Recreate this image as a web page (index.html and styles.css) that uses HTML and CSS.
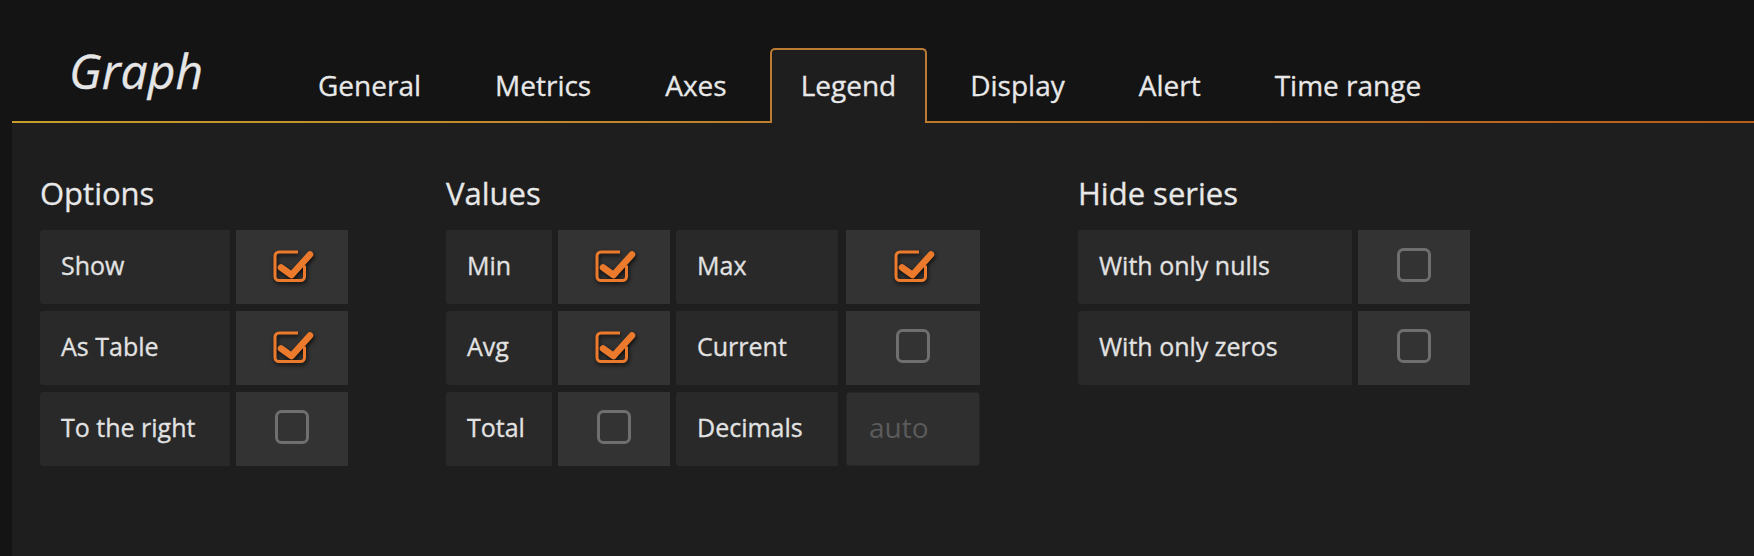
FILE: index.html
```html
<!DOCTYPE html>
<html lang="en">
<head>
<meta charset="utf-8">
<title>Graph - Legend</title>
<link rel="stylesheet" href="styles.css">
</head>
<body>
<div class="header">
  <div class="title">Graph</div>
  <nav class="tabs">
    <div class="tab">General</div>
    <div class="tab">Metrics</div>
    <div class="tab">Axes</div>
    <div class="tab active">Legend</div>
    <div class="tab">Display</div>
    <div class="tab">Alert</div>
    <div class="tab">Time range</div>
  </nav>
</div>
<div class="panel">
  <section class="group">
    <h5 class="group-title">Options</h5>
    <div class="grid grid-options">
      <div class="lbl">Show</div>
      <div class="cb"><svg class="cb-on" viewBox="0 0 50 46" width="50" height="46"><path d="M37.5 21.5V32.5A4 4 0 0 1 33.5 36.5H12A4 4 0 0 1 8 32.5V12A4 4 0 0 1 12 8H31" fill="none" stroke="#ec7a2c" stroke-width="3"/><path d="M14 23.5L24.5 31L43 10.5" fill="none" stroke="#ec7a2c" stroke-width="6.5" stroke-linecap="round" stroke-linejoin="round"/></svg></div>
      <div class="lbl">As Table</div>
      <div class="cb"><svg class="cb-on" viewBox="0 0 50 46" width="50" height="46"><path d="M37.5 21.5V32.5A4 4 0 0 1 33.5 36.5H12A4 4 0 0 1 8 32.5V12A4 4 0 0 1 12 8H31" fill="none" stroke="#ec7a2c" stroke-width="3"/><path d="M14 23.5L24.5 31L43 10.5" fill="none" stroke="#ec7a2c" stroke-width="6.5" stroke-linecap="round" stroke-linejoin="round"/></svg></div>
      <div class="lbl">To the right</div>
      <div class="cb"><svg class="cb-off" viewBox="0 0 34 34" width="34" height="34"><rect x="1.5" y="1.5" width="31" height="31" rx="5" fill="none" stroke="#6f6f6f" stroke-width="3"/></svg></div>
    </div>
  </section>
  <section class="group">
    <h5 class="group-title">Values</h5>
    <div class="grid grid-values">
      <div class="lbl">Min</div>
      <div class="cb"><svg class="cb-on" viewBox="0 0 50 46" width="50" height="46"><path d="M37.5 21.5V32.5A4 4 0 0 1 33.5 36.5H12A4 4 0 0 1 8 32.5V12A4 4 0 0 1 12 8H31" fill="none" stroke="#ec7a2c" stroke-width="3"/><path d="M14 23.5L24.5 31L43 10.5" fill="none" stroke="#ec7a2c" stroke-width="6.5" stroke-linecap="round" stroke-linejoin="round"/></svg></div>
      <div class="lbl lbl-mid">Max</div>
      <div class="cb cb-wide"><svg class="cb-on" viewBox="0 0 50 46" width="50" height="46"><path d="M37.5 21.5V32.5A4 4 0 0 1 33.5 36.5H12A4 4 0 0 1 8 32.5V12A4 4 0 0 1 12 8H31" fill="none" stroke="#ec7a2c" stroke-width="3"/><path d="M14 23.5L24.5 31L43 10.5" fill="none" stroke="#ec7a2c" stroke-width="6.5" stroke-linecap="round" stroke-linejoin="round"/></svg></div>
      <div class="lbl">Avg</div>
      <div class="cb"><svg class="cb-on" viewBox="0 0 50 46" width="50" height="46"><path d="M37.5 21.5V32.5A4 4 0 0 1 33.5 36.5H12A4 4 0 0 1 8 32.5V12A4 4 0 0 1 12 8H31" fill="none" stroke="#ec7a2c" stroke-width="3"/><path d="M14 23.5L24.5 31L43 10.5" fill="none" stroke="#ec7a2c" stroke-width="6.5" stroke-linecap="round" stroke-linejoin="round"/></svg></div>
      <div class="lbl lbl-mid">Current</div>
      <div class="cb cb-wide"><svg class="cb-off" viewBox="0 0 34 34" width="34" height="34"><rect x="1.5" y="1.5" width="31" height="31" rx="5" fill="none" stroke="#6f6f6f" stroke-width="3"/></svg></div>
      <div class="lbl">Total</div>
      <div class="cb"><svg class="cb-off" viewBox="0 0 34 34" width="34" height="34"><rect x="1.5" y="1.5" width="31" height="31" rx="5" fill="none" stroke="#6f6f6f" stroke-width="3"/></svg></div>
      <div class="lbl lbl-mid">Decimals</div>
      <div class="input-wrap"><input class="input" type="text" placeholder="auto"></div>
    </div>
  </section>
  <section class="group">
    <h5 class="group-title">Hide series</h5>
    <div class="grid grid-hide">
      <div class="lbl">With only nulls</div>
      <div class="cb"><svg class="cb-off" viewBox="0 0 34 34" width="34" height="34"><rect x="1.5" y="1.5" width="31" height="31" rx="5" fill="none" stroke="#6f6f6f" stroke-width="3"/></svg></div>
      <div class="lbl">With only zeros</div>
      <div class="cb"><svg class="cb-off" viewBox="0 0 34 34" width="34" height="34"><rect x="1.5" y="1.5" width="31" height="31" rx="5" fill="none" stroke="#6f6f6f" stroke-width="3"/></svg></div>
    </div>
  </section>
</div>
</body>
</html>
```

FILE: styles.css
```css
html, body {
  margin: 0;
  padding: 0;
}

body {
  background: #141414;
  font-family: "Open Sans", "Noto Sans", sans-serif;
  color: #e4e4e4;
  height: 556px;
  overflow: hidden;
  -webkit-text-stroke: 0.3px currentColor;
}

.header {
  margin-left: 12px;
  height: 121px;
  display: flex;
  align-items: flex-end;
  border-bottom: 2px solid #c39a2a;
  border-image: linear-gradient(to right, #c69d2b 0%, #be7f2a 45%, #b65d1e 100%) 1;
}

.title {
  align-self: flex-start;
  box-sizing: border-box;
  width: 275px;
  padding-left: 57px;
  margin-top: 47px;
  font-size: 48px;
  line-height: 48px;
  font-style: italic;
  color: #e6e6e6;
}

.tabs {
  display: flex;
  align-items: flex-end;
  gap: 12px;
}

.tab {
  position: relative;
  box-sizing: border-box;
  height: 75px;
  margin-bottom: -2px;
  padding: 16px 29px 0;
  border: 2px solid transparent;
  border-bottom: 0;
  border-radius: 5px 5px 0 0;
  font-size: 28px;
  line-height: 38px;
  color: #e8e8e8;
  white-space: nowrap;
}

.tab.active {
  z-index: 1;
  background: #1f1e1f;
  border-color: #bb7b34;
}

.panel {
  margin-left: 12px;
  height: 433px;
  box-sizing: border-box;
  background: #1f1e1f;
  padding: 50px 0 0 28px;
  display: flex;
  align-items: flex-start;
  gap: 98px;
}

.group-title {
  margin: 0 0 17px;
  font-size: 31px;
  line-height: 40px;
  font-weight: 400;
  color: #e8e8e8;
}

.grid {
  display: grid;
  grid-auto-rows: 74px;
  row-gap: 7px;
  column-gap: 6px;
}

.grid-options {
  grid-template-columns: 190px 112px;
}

.grid-values {
  grid-template-columns: 106px 112px 164px 134px;
}

.grid-hide {
  grid-template-columns: 274px 112px;
}

.lbl {
  box-sizing: border-box;
  display: flex;
  align-items: center;
  padding: 0 0 5px 21px;
  background: #292929;
  border-radius: 3px 0 0 3px;
  font-size: 25px;
  color: #e2e2e2;
  white-space: nowrap;
}

.lbl-mid {
  margin-right: 2px;
}

.cb {
  display: flex;
  align-items: center;
  justify-content: center;
  background: #333333;
}

.cb-on {
  filter: drop-shadow(1px 2px 2px rgba(0, 0, 0, 0.75));
}

.cb-off {
  margin-bottom: 4px;
}

.input-wrap {
  display: flex;
}

.input {
  box-sizing: border-box;
  width: 100%;
  height: 100%;
  margin: 0;
  padding: 0 0 4px 22px;
  background: #2f2f2f;
  border: 1px solid #262626;
  border-radius: 3px;
  font-family: "Open Sans", "Noto Sans", sans-serif;
  font-size: 28px;
  color: #d8d8d8;
  outline: none;
  -webkit-text-stroke: 0;
}

.input::placeholder {
  color: #5b5b5b;
}
```
